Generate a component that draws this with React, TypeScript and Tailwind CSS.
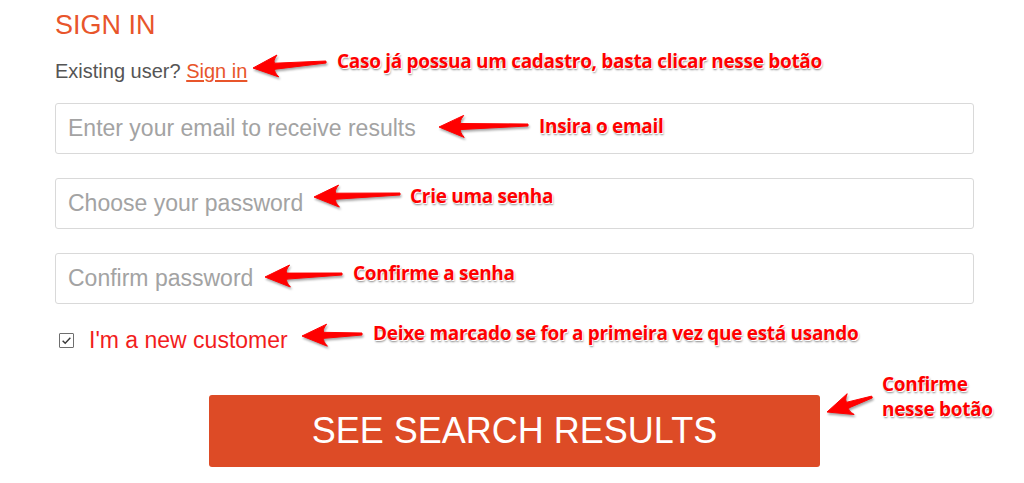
import React from "react";

const arrows = [
  { tip: [253, 68], tail: [326, 62] },
  { tip: [439, 127], tail: [528, 125] },
  { tip: [314, 197], tail: [400, 194] },
  { tip: [265, 277], tail: [342, 274] },
  { tip: [302, 336], tail: [362, 334] },
  { tip: [827, 412], tail: [872, 397] },
];

const notes = [
  { text: "Caso já possua um cadastro, basta clicar nesse botão", left: 337, top: 52 },
  { text: "Insira o email", left: 539, top: 117 },
  { text: "Crie uma senha", left: 410, top: 187 },
  { text: "Confirme a senha", left: 353, top: 264 },
  { text: "Deixe marcado se for a primeira vez que está usando", left: 373, top: 324 },
  { text: "Confirme", left: 882, top: 375 },
  { text: "nesse botão", left: 882, top: 400 },
];

function arrowPath(tip: number[], tail: number[]) {
  const [tx, ty] = tip;
  const [sx, sy] = tail;
  const len = Math.hypot(sx - tx, sy - ty);
  const ux = (sx - tx) / len;
  const uy = (sy - ty) / len;
  const nx = -uy;
  const ny = ux;
  const p = (a: number, b: number) =>
    `${(tx + ux * a + nx * b).toFixed(1)},${(ty + uy * a + ny * b).toFixed(1)}`;
  return `M${p(0, 0)} L${p(25, -11)} Q${p(20, -5)} ${p(22, -3)} L${p(len, -1)} L${p(len, 1)} L${p(22, 3)} Q${p(20, 5)} ${p(25, 11)} Z`;
}

function Field({ placeholder }: { placeholder: string }) {
  return (
    <input
      type="text"
      placeholder={placeholder}
      className="h-[51px] w-full rounded-[3px] border border-[#d9d9d9] bg-white pl-3 text-[23px] text-[#555] outline-none placeholder:text-[#a3a3a3]"
    />
  );
}

export default function App() {
  return (
    <div className="relative h-[483px] w-[1024px] overflow-hidden bg-white font-['Liberation_Sans',Arial,sans-serif]">
      <div className="ml-[55px] flex w-[919px] flex-col pt-[10px]">
        <h1 className="text-[27px] leading-[30px] text-[#e8552b]">SIGN IN</h1>
        <p className="mt-[20px] text-[20px] leading-[23px] text-[#555]">
          Existing user?{" "}
          <a href="#" className="text-[#e8552b] underline underline-offset-2">
            Sign in
          </a>
        </p>

        <div className="mt-[20px] flex flex-col gap-[24px]">
          <Field placeholder="Enter your email to receive results" />
          <Field placeholder="Choose your password" />
          <Field placeholder="Confirm password" />
        </div>

        <label className="mt-[21px] flex h-[30px] items-center">
          <span className="ml-[4px] flex h-[15px] w-[15px] items-center justify-center rounded-[1px] border-[1.5px] border-[#6e6e6e] bg-white">
            <svg viewBox="0 0 12 12" className="h-[11px] w-[11px]">
              <path d="M1.8 6.2 L4.6 9 L10.2 3" fill="none" stroke="#3a3a3a" strokeWidth="1.6" />
            </svg>
          </span>
          <span className="ml-[15px] text-[23px] leading-[30px] text-[#f21d1d]">I'm a new customer</span>
        </label>

        <button className="mx-auto mt-[40px] h-[72px] w-[611px] rounded-[3px] bg-[#dd4b26] text-[36px] text-white">
          SEE SEARCH RESULTS
        </button>
      </div>

      <svg className="pointer-events-none absolute inset-0 h-[483px] w-[1024px] drop-shadow-[1px_2px_1px_rgba(0,0,0,0.35)]">
        {arrows.map((a, i) => (
          <path key={i} d={arrowPath(a.tip, a.tail)} fill="#ff0000" stroke="#ff0000" strokeWidth="1" strokeLinejoin="round" />
        ))}
      </svg>

      {notes.map((n) => (
        <span
          key={n.text}
          className="absolute whitespace-nowrap font-['Open_Sans','Noto_Sans',sans-serif] text-[19px] leading-none font-bold tracking-[-0.3px] text-[#ff0000] [text-shadow:0_0_1px_#fff,1px_1px_0_#fff,1px_2px_2px_rgba(0,0,0,0.45)]"
          style={{ left: n.left, top: n.top }}
        >
          {n.text}
        </span>
      ))}
    </div>
  );
}
